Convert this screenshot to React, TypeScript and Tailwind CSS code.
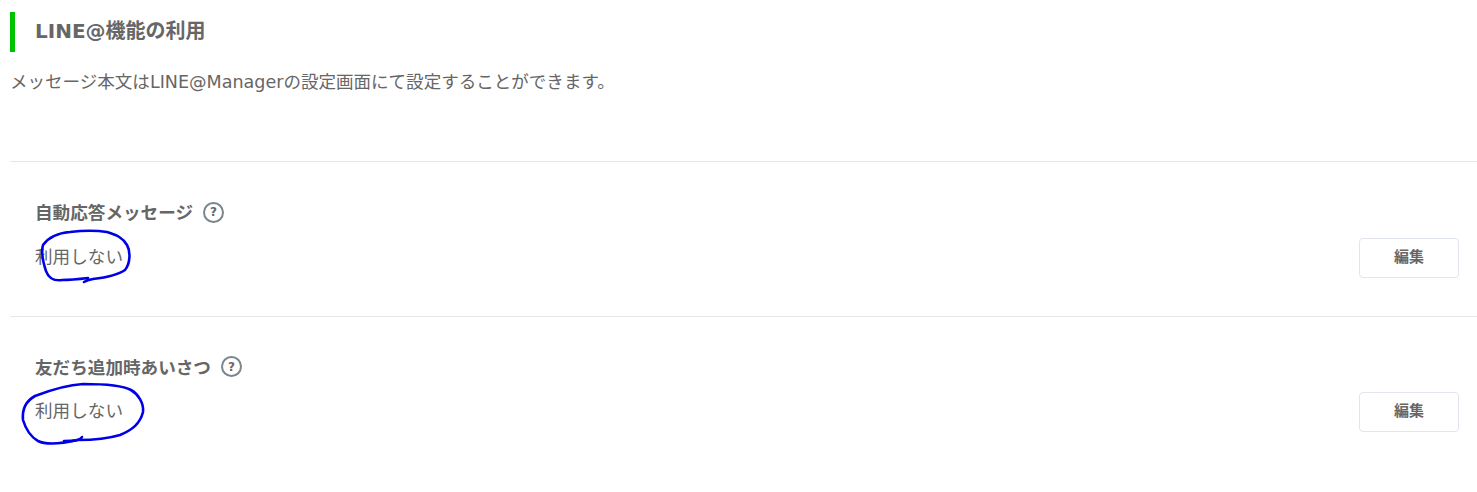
const font = "[font-family:'DejaVu_Sans','Noto_Sans_CJK_JP',sans-serif]";
const cjk = "[font-family:'Noto_Sans_CJK_JP',sans-serif]";

function Help() {
  return (
    <span className="flex h-[21px] w-[21px] items-center justify-center rounded-full border-2 border-[#7a868c] text-[12px] font-bold leading-none text-[#666666]">
      ?
    </span>
  );
}

function Row({ title }: { title: string }) {
  return (
    <section className="flex h-[154.6px] items-start justify-between border-t border-[#e6e6e6] pl-[25px] pr-[18px] pt-[37px]">
      <div>
        <div className="flex items-center gap-[10px]">
          <h3 className={`text-[17.6px] font-bold leading-[26px] ${cjk}`}>{title}</h3>
          <Help />
        </div>
        <p className={`mt-[18.6px] text-[17.6px] leading-[24px] ${cjk}`}>利用しない</p>
      </div>
      <button className={`mt-[38.6px] h-[40px] w-[100px] rounded-[4px] border border-[#e1e5ec] bg-white pb-[3px] text-[15px] font-bold text-[#666666] ${cjk}`}>
        編集
      </button>
    </section>
  );
}

export default function App() {
  return (
    <div className={`relative h-[492px] w-[1477px] overflow-hidden bg-white text-[#666666] ${font}`}>
      <div className="pl-[10px] pt-[12px]">
        <h2 className="flex h-[40px] items-center border-l-[5px] border-[#00c300] pb-[2px] pl-[20px] text-[20px] font-bold">
          LINE@機能の利用
        </h2>
        <p className="mt-[18px] text-[17.55px] leading-[24px]">
          メッセージ本文はLINE@Managerの設定画面にて設定することができます。
        </p>
        <div className="mt-[67px]">
          <Row title="自動応答メッセージ" />
          <Row title="友だち追加時あいさつ" />
        </div>
      </div>
      <svg className="absolute left-0 top-0" width="1477" height="492" fill="none" stroke="#0000e6" strokeWidth="2.6" strokeLinecap="round" strokeLinejoin="round">
        <path d="M84 282 C87 280 90 279.5 93 279 C106 277.5 118 275 125 270 C130 264 131 252 127 245 C123 238 117 235 107 232 C95 230 78 231 70 232 C58 233 48 238 43 245 C41 252 43 262 46 271 C49 279 54 281 62 280 C70 280 80 279 88 278" />
        <path d="M64 441 C72 441 80 441 82 437" />
        <path d="M78 440 C95 440 110 438 120 435 C132 430 140 424 143 412 C144 403 138 394 131 390 C122 385 100 384 83 384 C66 385 48 391 35 396 C26 401 22 410 23 420 C26 430 31 437 38 441 C46 445 60 444 78 440" />
      </svg>
    </div>
  );
}
